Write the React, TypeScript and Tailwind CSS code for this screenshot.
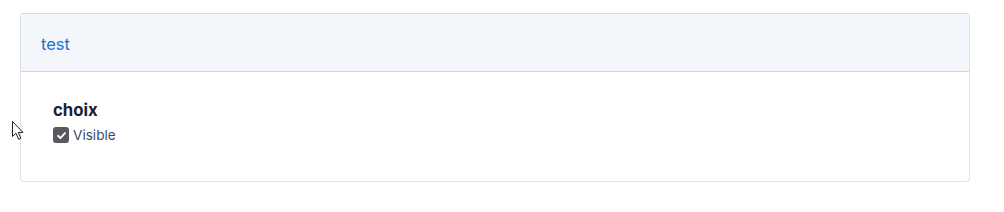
import React from "react";

export default function App() {
  return (
    <div className="relative w-[1004px] h-[212px] bg-white" style={{ fontFamily: "Inter, 'Noto Sans', sans-serif" }}>
      <div className="pt-[13px] pl-[20px]">
        <div className="w-[950px] h-[169px] rounded-[4px] border border-[#dfe3e8] border-t-[#c9dbf2] overflow-hidden flex flex-col">
          <div className="h-[58px] bg-[#f3f7fc] border-b border-[#c9d8ec] border-x-[#d3deeb] flex items-center pl-[20px]">
            <span className="text-[16.5px] text-[#1f6fd1] leading-[20px] mt-[2px]">test</span>
          </div>
          <div className="pl-[32px] pt-[27px]">
            <div className="text-[16.75px] font-bold text-[#1a2233] leading-[22px]">choix</div>
            <label className="flex items-center gap-[4px] mt-[5px]">
              <span className="w-[16px] h-[16px] rounded-[3px] bg-[#58595c] flex items-center justify-center">
                <svg width="11" height="11" viewBox="0 0 12 12" fill="none">
                  <path d="M2.2 6.3 L4.8 8.8 L9.8 3.3" stroke="white" strokeWidth="2" strokeLinecap="round" strokeLinejoin="round" />
                </svg>
              </span>
              <span className="text-[13.6px] text-[#3b4a66] leading-[18px]">Visible</span>
            </label>
          </div>
        </div>
      </div>
      <svg className="absolute left-[12px] top-[121px]" width="13" height="20" viewBox="0 0 13 20">
        <path d="M0.5 0.5 L0.5 15.5 L4 12.2 L6.6 18.3 L8.8 17.3 L6.3 11.4 L11 11.4 Z" fill="white" stroke="#222" strokeWidth="1" strokeLinejoin="round" />
      </svg>
    </div>
  );
}
